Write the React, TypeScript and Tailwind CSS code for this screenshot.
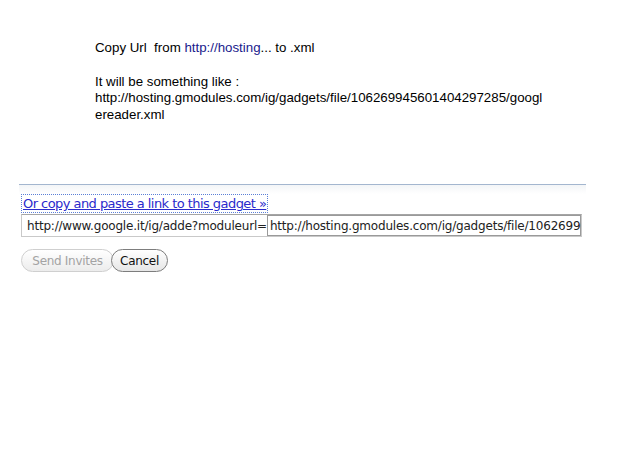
const App = () => {
  return (
    <div className="w-[638px] h-[451px] bg-white overflow-hidden">
      <div className="pl-[95px] pt-[40px] text-[13.3px] leading-[16.5px] text-black font-['Liberation_Sans',Arial,sans-serif]">
        <p>
          Copy Url&nbsp; from <span className="text-[#1a1a8c]">http://hosting</span>... to .xml
        </p>
        <p className="mt-[17px]">It will be something like :</p>
        <p>http://hosting.gmodules.com/ig/gadgets/file/106269945601404297285/googl</p>
        <p>ereader.xml</p>
      </div>

      <div className="mt-[61px] ml-[19px] w-[567px] h-[10px] border-t border-[#a3b6cf] bg-gradient-to-b from-[#f3f5f7] to-white" />

      <div className="pl-[21px] font-['DejaVu_Sans',Verdana,sans-serif]">
        <a
          href="#"
          className="block w-fit border border-dotted border-[#5b7fd6] px-[1px] text-[13px] leading-[17px] text-[#2a2acc] underline tracking-[-0.55px]"
        >
          Or copy and paste a link to this gadget »
        </a>
        <div className="mt-[1px] w-[561px] h-[23px] flex items-center border border-[#c9c9c9] border-t-[#a5a5a5] bg-white text-[12px] text-[#222] tracking-[-0.2px] whitespace-nowrap overflow-hidden">
          <span className="pl-[5px] pr-[1px]">http://www.google.it/ig/adde?moduleurl=</span>
          <span className="flex-1 h-full flex items-center border border-[#9a9a9a] pl-[2px] -ml-[1px]">
            http://hosting.gmodules.com/ig/gadgets/file/1062699
          </span>
        </div>
        <div className="mt-[12px] flex items-center text-[12px] tracking-[-0.3px]">
          <button className="h-[23px] w-[93px] rounded-full border border-[#cfcfcf] bg-gradient-to-b from-white to-[#ececec] text-[#a3a3a3]">
            Send Invites
          </button>
          <button className="-ml-[3px] h-[23px] w-[57px] rounded-full border border-[#7d7d7d] bg-gradient-to-b from-white to-[#e6e6e6] text-[#111]">
            Cancel
          </button>
        </div>
      </div>
    </div>
  );
};

export default App;
